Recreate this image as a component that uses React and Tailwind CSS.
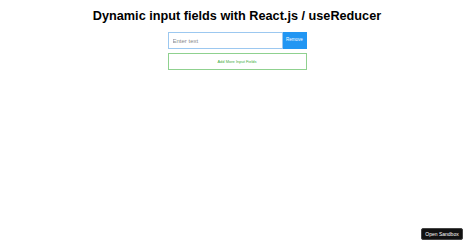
export default function App() {
  return (
    <div className="relative w-[474px] h-[248px] bg-white overflow-hidden" style={{ fontFamily: '"Liberation Sans", Arial, sans-serif' }}>
      <div className="flex flex-col items-center pt-[8px]">
        <h1 className="text-[12.7px] font-bold leading-[16px] text-black">Dynamic input fields with React.js / useReducer</h1>
        <div className="mt-[8px] w-[139px] flex flex-col gap-[4px]">
          <div className="flex h-[17px]">
            <input
              placeholder="Enter text"
              className="flex-1 min-w-0 h-full border border-[#9cc8f0] px-[4px] text-[6px] text-gray-700 placeholder:text-[#8a8a8a] outline-none"
            />
            <button className="w-[24px] h-full bg-[#2196f3] text-white text-[4.5px]">Remove</button>
          </div>
          <button className="h-[17px] w-full border border-[#8fd18f] text-[#3fae3f] text-[4px] bg-white">Add More Input Fields</button>
        </div>
      </div>
      <button className="absolute left-[421px] top-[228px] w-[42px] h-[12px] bg-[#111] text-white text-[5px] leading-none rounded-[2px] border border-[#444]">Open Sandbox</button>
    </div>
  );
}
